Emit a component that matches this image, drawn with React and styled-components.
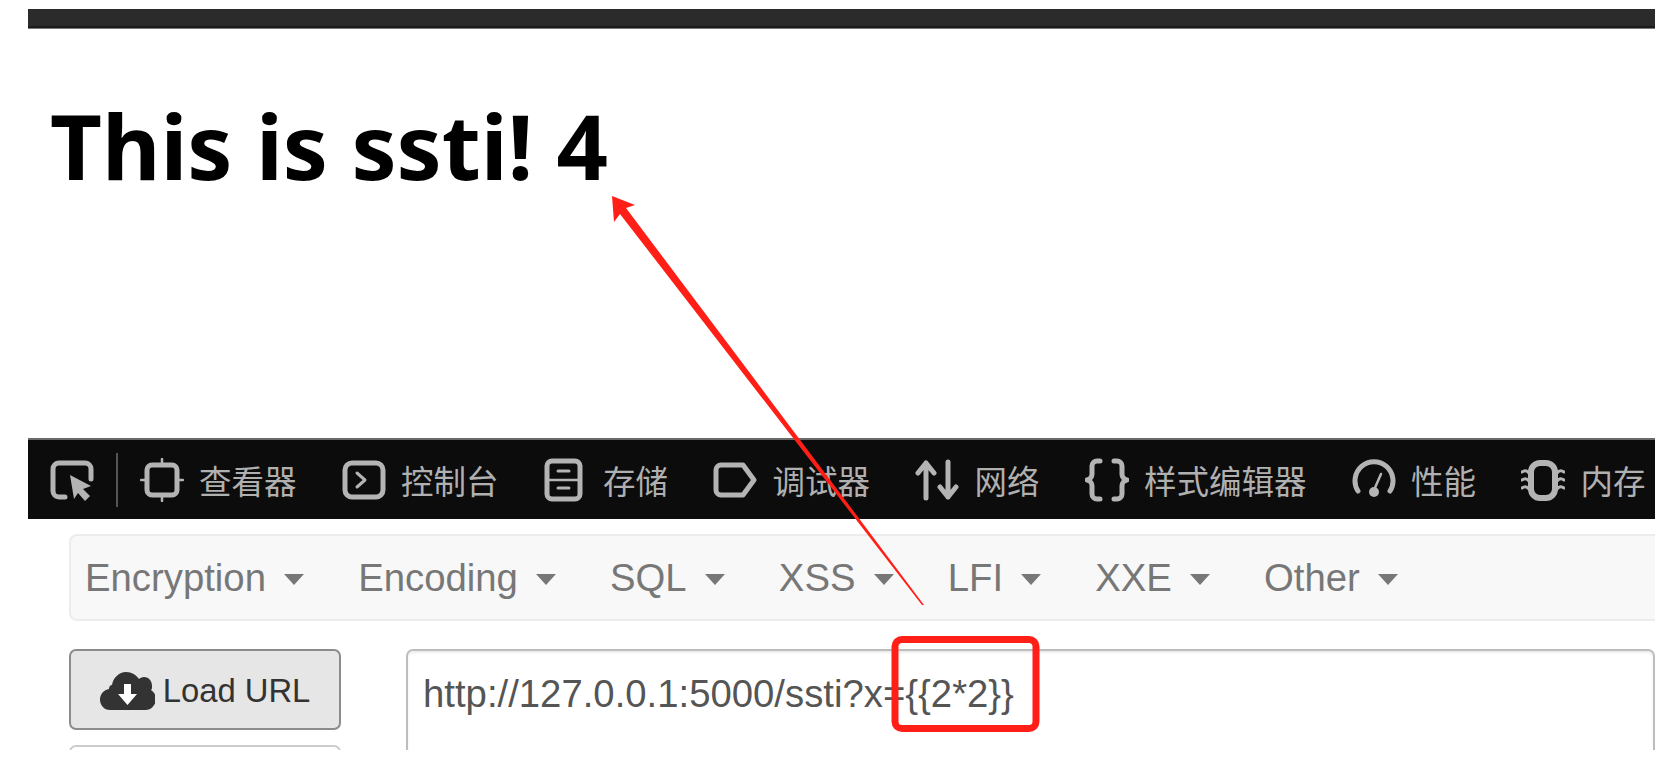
import React from "react";
import styled, { createGlobalStyle } from "styled-components";

const GlobalStyle = createGlobalStyle`
  html, body {
    margin: 0;
    padding: 0;
    background: #fff;
    overflow: hidden;
  }
`;

const Screen = styled.div`
  position: relative;
  width: 1655px;
  height: 750px;
  box-sizing: border-box;
  padding: 9px 0 0 28px;
  overflow: hidden;
  background: #fff;
`;

const TopBar = styled.div`
  height: 19px;
  box-sizing: content-box;
  background: #2b2b2b;
  border-bottom: 1px solid #777;
  box-shadow: inset 0 -2px 0 #1c1c1c;
`;

const PageBody = styled.div`
  height: 409px;
  box-sizing: border-box;
  padding: 70px 0 0 22px;
`;

const Heading = styled.h1`
  margin: 0;
  font: 700 90px/92px "Noto Sans", "Open Sans", sans-serif;
  color: #000;
`;

const DevTools = styled.div`
  display: flex;
  align-items: center;
  height: 79px;
  padding-left: 22px;
  background: #0c0c0c;
  border-top: 2px solid #6a6a6a;
  white-space: nowrap;
`;

const Separator = styled.div`
  width: 2px;
  height: 54px;
  margin: 0 21.5px 0 22px;
  background: #555;
`;

const Tabs = styled.div`
  display: flex;
  align-items: center;
  gap: 45px;
`;

const Tab = styled.div`
  display: flex;
  align-items: center;
  gap: 15.5px;
  color: #b0b0b0;
  font: 400 32.5px/44px "Noto Sans CJK SC", sans-serif;
`;

const ToolIcon = styled.svg`
  display: block;
  width: 44px;
  height: 44px;
  flex: none;
  fill: none;
  stroke: #b4b4b4;
  stroke-width: 5;
  stroke-linecap: round;
  stroke-linejoin: round;
`;

const HackBar = styled.div`
  padding: 15px 0 0 41px;
`;

const Menu = styled.div`
  display: flex;
  align-items: center;
  gap: 54.2px;
  width: 1700px;
  height: 83px;
  padding-left: 14px;
  background: #f8f8f8;
  border: 2px solid #ececec;
  border-radius: 8px;
`;

const MenuItem = styled.div`
  display: flex;
  align-items: center;
  gap: 18px;
  color: #777;
  font: 400 38.3px/44px "Liberation Sans", Arial, sans-serif;
`;

const Caret = styled.span`
  width: 0;
  height: 0;
  margin-top: 4px;
  border-top: 11px solid #777;
  border-left: 10.5px solid transparent;
  border-right: 10.5px solid transparent;
`;

const Workspace = styled.div`
  display: flex;
  gap: 65px;
  margin-top: 28px;
`;

const Side = styled.div`
  display: flex;
  flex-direction: column;
  gap: 15px;
  width: 272px;
  flex: none;
`;

const SideButton = styled.div`
  display: flex;
  align-items: center;
  justify-content: center;
  gap: 8px;
  box-sizing: border-box;
  height: ${(p) => (p.$active ? "81px" : "60px")};
  padding-top: 2px;
  background: ${(p) => (p.$active ? "#e6e6e6" : "#fff")};
  border: 2px solid ${(p) => (p.$active ? "#8c8c8c" : "#ccc")};
  border-radius: 7px;
  color: #333;
  font: 400 32.8px/40px "Liberation Sans", Arial, sans-serif;
`;

const UrlBox = styled.div`
  box-sizing: border-box;
  width: 1300px;
  height: 200px;
  padding: 21px 15px;
  border: 2px solid #bdbdbd;
  border-radius: 7px;
  box-shadow: inset 0 2px 2px rgba(0, 0, 0, 0.075);
  color: #555;
  font: 400 38.3px/44px "Liberation Sans", Arial, sans-serif;
`;

const Annotations = styled.svg`
  position: absolute;
  left: 0;
  top: 0;
  width: 1655px;
  height: 758px;
  pointer-events: none;
`;

const PickIcon = () => (
  <ToolIcon viewBox="0 0 44 44">
    <path d="M15 39H9a6 6 0 0 1-6-6V11a6 6 0 0 1 6-6h26a6 6 0 0 1 6 6v10" />
    <path
      d="M20 17l21 11-8 3 7 7-5 5-7-8-4 6z"
      fill="#b4b4b4"
      stroke="none"
    />
  </ToolIcon>
);

const InspectorIcon = () => (
  <ToolIcon viewBox="0 0 44 44">
    <rect x="7" y="7" width="30" height="30" rx="5" />
    <path d="M22 1v6M22 37v6M1 22h6M37 22h6" strokeWidth="2.5" />
  </ToolIcon>
);

const ConsoleIcon = () => (
  <ToolIcon viewBox="0 0 44 44">
    <rect x="3" y="5" width="38" height="34" rx="7" />
    <path d="M15 15l8 7-8 7" strokeWidth="3" />
  </ToolIcon>
);

const StorageIcon = () => (
  <ToolIcon viewBox="0 0 44 44">
    <rect x="3" y="3" width="33" height="38" rx="5" />
    <path d="M14 13h11M14 30h11" strokeWidth="3" />
    <path d="M3 22h33" strokeWidth="2.5" />
  </ToolIcon>
);

const DebuggerIcon = () => (
  <ToolIcon viewBox="0 0 44 44">
    <path d="M8 7h22l11 15-11 15H8a5 5 0 0 1-5-5V12a5 5 0 0 1 5-5z" />
  </ToolIcon>
);

const NetworkIcon = () => (
  <ToolIcon viewBox="0 0 44 44">
    <path d="M11 40V5M3 15l8-10 8 10M33 4v35M25 29l8 10 8-10" />
  </ToolIcon>
);

const StyleIcon = () => (
  <ToolIcon viewBox="0 0 44 44">
    <path d="M15 3h-3a5 5 0 0 0-5 5v8a6 6 0 0 1-5 6 6 6 0 0 1 5 6v8a5 5 0 0 0 5 5h3" />
    <path d="M29 3h3a5 5 0 0 1 5 5v8a6 6 0 0 0 5 6 6 6 0 0 0-5 6v8a5 5 0 0 1-5 5h-3" />
  </ToolIcon>
);

const PerformanceIcon = () => (
  <ToolIcon viewBox="0 0 44 44">
    <path d="M6 33a19 19 0 1 1 32 0" />
    <path d="M22 32l7-16" strokeWidth="2.5" />
    <circle cx="22" cy="34" r="5" fill="#b4b4b4" stroke="none" />
  </ToolIcon>
);

const MemoryIcon = () => (
  <ToolIcon viewBox="0 0 44 44">
    <rect x="10" y="5" width="24" height="35" rx="9" strokeWidth="6" />
    <path
      d="M8 15Q5 11 1 14M8 23Q5 19 1 22M8 31Q5 27 1 30M36 15Q39 11 43 14M36 23Q39 19 43 22M36 31Q39 27 43 30"
      strokeWidth="3"
    />
  </ToolIcon>
);

const tabs = [
  { label: "查看器", Icon: InspectorIcon },
  { label: "控制台", Icon: ConsoleIcon },
  { label: "存储", Icon: StorageIcon },
  { label: "调试器", Icon: DebuggerIcon },
  { label: "网络", Icon: NetworkIcon },
  { label: "样式编辑器", Icon: StyleIcon },
  { label: "性能", Icon: PerformanceIcon },
  { label: "内存", Icon: MemoryIcon },
];

const menuItems = ["Encryption", "Encoding", "SQL", "XSS", "LFI", "XXE", "Other"];

const CloudIcon = () => (
  <svg width="55" height="38" viewBox="0 0 55 38">
    <path
      fill="#333"
      d="M10 38C4 38 0 33 0 27.500 0 22 4 18 9 17c0-2 1-4 3-4 1-7 7-13 14-13 6 0 10 3 13 7 1-1 3-2 5-2 5 0 8 4 8 9 0 2 0 3-1 4 3 2 5 5 5 9 0 6-5 11-10 11z"
    />
    <path
      fill="#fff"
      d="M24 12h7v10h6L27.500 33 18 22h6z"
    />
  </svg>
);

const App = () => {
  return (
    <>
      <GlobalStyle />
      <Screen>
        <TopBar />
        <PageBody>
          <Heading>This is ssti! 4</Heading>
        </PageBody>
        <DevTools>
          <PickIcon />
          <Separator />
          <Tabs>
            {tabs.map(({ label, Icon }) => (
              <Tab key={label}>
                <Icon />
                {label}
              </Tab>
            ))}
          </Tabs>
        </DevTools>
        <HackBar>
          <Menu>
            {menuItems.map((item) => (
              <MenuItem key={item}>
                {item}
                <Caret />
              </MenuItem>
            ))}
          </Menu>
          <Workspace>
            <Side>
              <SideButton $active>
                <CloudIcon />
                Load URL
              </SideButton>
              <SideButton />
            </Side>
            <UrlBox>{"http://127.0.0.1:5000/ssti?x={{2*2}}"}</UrlBox>
          </Workspace>
        </HackBar>
        <Annotations viewBox="0 0 1655 758">
          <polygon
            fill="#ff1f17"
            points="612,196 635,205 626,208 924,605 922,605 620,214 614,222"
          />
          <rect
            x="895"
            y="639.500"
            width="141"
            height="89"
            rx="7"
            fill="none"
            stroke="#ff1f17"
            strokeWidth="7"
          />
        </Annotations>
      </Screen>
    </>
  );
};

export default App;
